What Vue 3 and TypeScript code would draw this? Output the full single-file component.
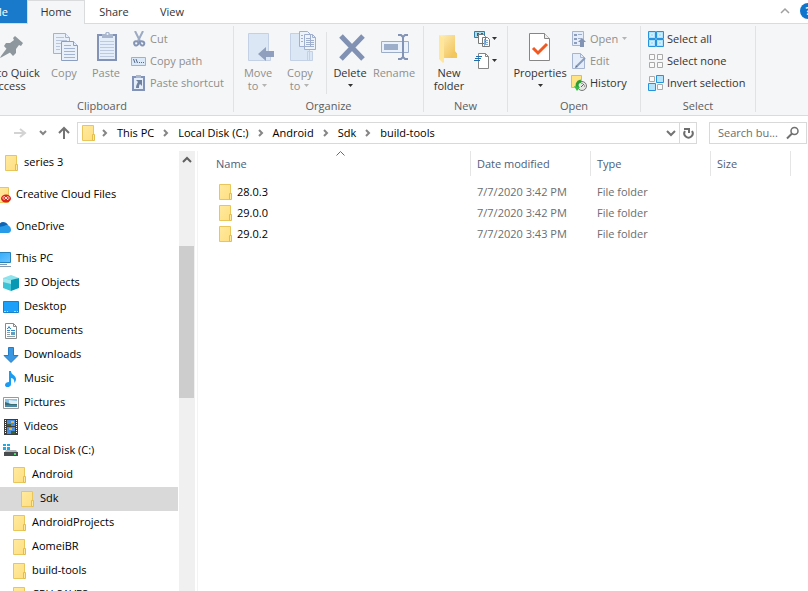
<script setup lang="ts">
import { ref } from 'vue'

interface TreeItem {
  label: string
  icon: string
  depth: number
  spaced?: boolean
}

interface Entry {
  name: string
  modified: string
  type: string
}

const tree: TreeItem[] = [
  { label: 'series 3', icon: 'folder', depth: 1 },
  { label: 'Creative Cloud Files', icon: 'creative', depth: 0, spaced: true },
  { label: 'OneDrive', icon: 'onedrive', depth: 0, spaced: true },
  { label: 'This PC', icon: 'pc', depth: 0, spaced: true },
  { label: '3D Objects', icon: 'cube', depth: 1 },
  { label: 'Desktop', icon: 'desktop', depth: 1 },
  { label: 'Documents', icon: 'documents', depth: 1 },
  { label: 'Downloads', icon: 'downloads', depth: 1 },
  { label: 'Music', icon: 'music', depth: 1 },
  { label: 'Pictures', icon: 'pictures', depth: 1 },
  { label: 'Videos', icon: 'videos', depth: 1 },
  { label: 'Local Disk (C:)', icon: 'disk', depth: 1 },
  { label: 'Android', icon: 'folder', depth: 2 },
  { label: 'Sdk', icon: 'folder', depth: 3 },
  { label: 'AndroidProjects', icon: 'folder', depth: 2 },
  { label: 'AomeiBR', icon: 'folder', depth: 2 },
  { label: 'build-tools', icon: 'folder', depth: 2 },
  { label: 'CPU SAVES', icon: 'folder', depth: 2 },
]

const crumbs = ['This PC', 'Local Disk (C:)', 'Android', 'Sdk', 'build-tools']

const entries: Entry[] = [
  { name: '28.0.3', modified: '7/7/2020 3:42 PM', type: 'File folder' },
  { name: '29.0.0', modified: '7/7/2020 3:42 PM', type: 'File folder' },
  { name: '29.0.2', modified: '7/7/2020 3:43 PM', type: 'File folder' },
]

const selected = ref('Sdk')
const query = ref('')
</script>

<template>
  <div class="explorer">
    <svg class="sprite" aria-hidden="true">
      <defs>
        <linearGradient id="gFolder" x1="0" y1="0" x2="1" y2="1">
          <stop offset="0" stop-color="#ffeaa0" /><stop offset="1" stop-color="#ffdf80" />
        </linearGradient>
        <linearGradient id="gBack" x1="0" y1="0" x2="1" y2="1">
          <stop offset="0" stop-color="#fff0b8" /><stop offset="1" stop-color="#f0bd4c" />
        </linearGradient>
        <linearGradient id="gScreen" x1="0" y1="0" x2="1" y2="1">
          <stop offset="0" stop-color="#29a9fb" /><stop offset="1" stop-color="#6cc5fb" />
        </linearGradient>
      </defs>
      <symbol id="pin" viewBox="0 0 32 32">
        <path fill="#8f979e" d="M22 5L30 12L28 15L26 14L23 18L23 22L20 25L11 15L13 12L17 12L21 9L20 7ZM14 17L18 21L9 26L7 27L8 25Z" />
      </symbol>
      <symbol id="copy" viewBox="0 0 32 32">
        <g fill="#e9f0fa" stroke="#a4b2cf">
          <path d="M5.500 2.500h12l4 4v16h-16z" /><path d="M17.500 2.500v4h4" />
          <path d="M8 6.500h8M8 9.500h11M8 12.500h5M8 15.500h4M8 18.500h4" stroke="#b9c5dc" />
          <path d="M13.500 10.500h12l4 4v15h-16z" stroke="#8c9fc2" /><path d="M25.500 10.500v4h4" stroke="#8c9fc2" />
          <path d="M16 14.500h7M16 17.500h11M16 20.500h11M16 23.500h11M16 26.500h11" stroke="#a3b3d2" />
        </g>
      </symbol>
      <symbol id="paste" viewBox="0 0 32 32">
        <path fill="#e4edfa" stroke="#8293b7" stroke-width="2" d="M8 4h18v25H8z" />
        <path stroke="#bdc9df" d="M10 10.500h14M10 13.500h14M10 16.500h14M10 19.500h14M10 22.500h14M10 25.500h14" />
        <path fill="#a7b5cd" d="M12 7V3h3l1-2h3l1 2h3v4z" /><circle cx="17.500" cy="3" r="1" fill="#f2f5fa" />
      </symbol>
      <symbol id="moveto" viewBox="0 0 32 32">
        <path fill="#dce7f6" stroke="#c3d0e5" d="M6.500 2.500h20v27h-20z" /><path fill="#dce7f6" stroke="#c3d0e5" d="M23.500 20.500h5v9h-5z" />
        <path fill="#8f9fbd" d="M16 23l8-7v4h8v6h-8v4z" />
      </symbol>
      <symbol id="copyto" viewBox="0 0 32 32">
        <path fill="#dce7f6" stroke="#c3d0e5" d="M6.500 2.500h19v27h-19zM23.500 20.500h5v9h-5z" />
        <path fill="#edf3fb" stroke="#a0afcd" d="M15.500.5h8l3 3v12h-11zM20.500 3.500h8l3 3v12h-11z" />
        <path fill="none" stroke="#a0afcd" d="M28.500 3.500v3h3M17 4.500h2M17 7.500h2M17 10.500h2M22 7.500h5M22 9.500h8M22 11.500h8M22 13.500h8M22 15.500h8" />
      </symbol>
      <symbol id="delete" viewBox="0 0 32 32">
        <path stroke="#8191b4" stroke-width="5" d="M7 5l22 23M29 5L7 28" />
      </symbol>
      <symbol id="rename" viewBox="0 0 32 32">
        <path fill="#eaf1fb" stroke="#9cadca" d="M3.500 10.500h27v11h-27z" /><path fill="#9caeca" d="M6 13h14v6H6z" />
        <path fill="none" stroke="#8293b5" stroke-width="2" d="M20 4h3l2 2 2-2h3M25 5v22M20 28h3l2-2 2 2h3" />
      </symbol>
      <symbol id="newfolder" viewBox="0 0 32 32">
        <path fill="url(#gBack)" d="M6 4h16v16l2 3v4H11z" /><path fill="#f4c75b" d="M20 21l4 1v5h-4z" />
        <path fill="#ffe69a" d="M6 4l5 4v23l-1 1-4-4z" />
      </symbol>
      <symbol id="properties" viewBox="0 0 32 32">
        <path fill="#fff" stroke="#868686" d="M5.500 2.500h15l5 5v22h-20z" /><path fill="#eee" stroke="#868686" d="M20.500 2.500v5h5" />
        <path fill="none" stroke="#f05a22" stroke-width="3" d="M9 17l5 5 9-9" />
      </symbol>
      <symbol id="cut" viewBox="0 0 16 16">
        <path fill="none" stroke="#9daac3" stroke-width="2" d="M4 0l5 10M12 0L7 10" /><path fill="none" stroke="#8494b5" stroke-width="2" d="M6.500 10.500c-3-1-4 1-3 3s4 1 4-2zM9 10.500c3-1 5 1 4 3s-4 1-4-2z" />
      </symbol>
      <symbol id="copypath" viewBox="0 0 16 16">
        <path fill="#dce9f9" stroke="#9eafd0" d="M.5 4.500h14v8H.5z" /><path fill="none" stroke="#556887" d="M2.500 6l1.500 4M5 6l1.500 4M8 9.500h1M10 9.500h1M12 9.500h1" />
      </symbol>
      <symbol id="shortcut" viewBox="0 0 16 16">
        <path fill="#e4edfa" stroke="#8293b7" stroke-width="2" d="M2 2h11v13H2z" /><path fill="#a8b6ce" d="M5 0h5v3H5z" />
        <path fill="#71829f" d="M5 5h6v6L9 9c-1 1-1 2-1 4H5c0-3 1-4 2-6z" />
      </symbol>
      <symbol id="newitem" viewBox="0 0 16 16">
        <path fill="#a5ddec" stroke="#347ca1" d="M.5.5h10v6H.5z" /><path fill="#236796" d="M3 2h2v3H3zM7 2h2v2H7z" />
        <path fill="#fff" stroke="#777" d="M4.500 3.500h5l2 2v7h-7zM8.500 6.500h5l2 2v7h-7z" /><path stroke="#e58d87" d="M10.500 8v7" /><path stroke="#81aad4" d="M10 9.500h4M10 11.500h4M10 13.500h4" />
      </symbol>
      <symbol id="easy" viewBox="0 0 16 16">
        <path fill="#fff" stroke="#858585" d="M4.500.5h7l3 3v12h-10z" /><path fill="none" stroke="#858585" d="M11.500.5v3h3" /><path stroke="#236da9" stroke-width="1" d="M2 3.500h6M1 5.500h6M0 7.500h6" />
      </symbol>
      <symbol id="open" viewBox="0 0 16 16">
        <path fill="#e4edf9" stroke="#a6b4d0" d="M1.500.5h11v14h-11z" /><path fill="#8c9dbe" d="M3 3h3v2H3zM3 7h3v2H3zM3 11h3v2H3z" /><path stroke="#a0afc9" d="M7 3.500h4M7 7.500h4" /><path fill="#8293b4" d="M11 7l4 4h-2v5h-4v-5H7z" />
      </symbol>
      <symbol id="edit" viewBox="0 0 16 16">
        <path fill="#e4edf9" stroke="#a6b4d0" d="M1.500.5h8l4 4v11h-12z" /><path fill="none" stroke="#a6b4d0" d="M9.500.5v4h4" /><path stroke="#8b9cbb" stroke-width="2" d="M14 5l-8 8" /><path fill="#60718f" d="M4 15l1-3 2 2z" />
      </symbol>
      <symbol id="history" viewBox="0 0 16 16">
        <path fill="#ffe384" stroke="#e4bb4e" d="M.5.5h10v12H.5z" /><circle cx="11" cy="11" r="4.500" fill="#e5e7e5" stroke="#777" /><path fill="none" stroke="#626262" d="M10 12l3-3M11 8v1M13 11h1" /><path fill="none" stroke="#2a9e36" stroke-width="3" d="M10 6c-4 1-5 4-3 7" /><path fill="#35bc43" d="M3 11l6 1-3 4z" />
      </symbol>
      <symbol id="selall" viewBox="0 0 16 16">
        <path fill="#afe0fc" stroke="#2693df" stroke-width="1" d="M.5.5h7v7h-7zM8.500.5h7v7h-7zM.5 8.500h7v7h-7zM8.500 8.500h7v7h-7z" /><path fill="none" stroke="#d4effe" d="M2.500 2.500h3v3h-3zM10.500 2.500h3v3h-3zM2.500 10.500h3v3h-3zM10.500 10.500h3v3h-3z" />
      </symbol>
      <symbol id="selnone" viewBox="0 0 16 16">
        <path fill="#fafafa" stroke="#a9a9a9" d="M1.500 1.500h5v5h-5zM9.500 1.500h5v5h-5zM1.500 9.500h5v5h-5zM9.500 9.500h5v5h-5z" />
      </symbol>
      <symbol id="invert" viewBox="0 0 16 16">
        <path fill="#fafafa" stroke="#a9a9a9" d="M1.500 1.500h5v5h-5zM9.500 9.500h5v5h-5z" /><path fill="#b8e3fc" stroke="#2693df" d="M8.500.5h7v7h-7zM.5 8.500h7v7h-7z" />
      </symbol>
      <symbol id="folder" viewBox="0 0 16 16">
        <path fill="url(#gFolder)" stroke="#e9c65c" d="M2.500.5h11v15h-11z" /><path fill="#ffe99d" stroke="#e5bd4a" d="M12.500 9.500h2v6h-2z" />
      </symbol>
      <symbol id="creative" viewBox="0 0 16 16">
        <path fill="url(#gFolder)" stroke="#e9c65c" d="M2.500.5h11v15h-11z" /><ellipse cx="11" cy="11.500" rx="5" ry="4" fill="#dc2418" /><path fill="none" stroke="#ffe4dc" d="M13 13l-3-3c-1-1-2 0-2 1s1 2 2 1l2-2c1-1 2 0 2 1s-1 2-2 1" />
      </symbol>
      <symbol id="onedrive" viewBox="0 0 16 16">
        <path fill="#0f64b4" d="M1 9c0-2 2-3 3-3 1-4 7-4 9 0l-4 5H2z" /><path fill="#279be8" d="M2 13c-2-2-1-5 2-5l5-1 2-1c3 0 5 2 5 5 0 1-1 3-3 3H4z" />
      </symbol>
      <symbol id="pc" viewBox="0 0 16 16">
        <path fill="url(#gScreen)" stroke="#2781ba" d="M.5 1.500h15v10H.5z" /><path stroke="#829bb0" d="M5 13.500h7M4 15.500h12" />
      </symbol>
      <symbol id="cube" viewBox="0 0 16 16">
        <path fill="#8fe3ec" d="M0 3l8-3 8 3-8 3z" /><path fill="#3cc4d6" d="M0 3l8 2v11l-8-3z" /><path fill="#0798b4" d="M8 5l8-2v10l-8 3z" /><path fill="#a3e9f0" d="M0 3l8 2v4L0 7z" />
      </symbol>
      <symbol id="desktop" viewBox="0 0 16 16">
        <path fill="#1ca0fa" stroke="#1681c9" d="M.5 2.500h15v11H.5z" /><path stroke="#a9ddff" stroke-dasharray="2 1" d="M1 12.500h4M11 12.500h4" />
      </symbol>
      <symbol id="documents" viewBox="0 0 16 16">
        <path fill="#fff" stroke="#8a8a8a" d="M2.500.5h8l3 3v12h-11z" /><path fill="none" stroke="#8a8a8a" d="M10.500.5v3h3" /><path fill="none" stroke="#288bd2" d="M4 5.500h1l1-2 1 2h1M4 7.500h3M8 7.500h4" /><path fill="#609fc0" d="M8 9h4v3H8z" /><path stroke="#90a0aa" d="M4 9.500h3M4 11.500h3M4 13.500h8" />
      </symbol>
      <symbol id="downloads" viewBox="0 0 16 16"><path fill="#3b97e1" stroke="#257dc3" d="M5.500.5h5v8h4.500L8 15.500 1 8.500h4.500z" /></symbol>
      <symbol id="music" viewBox="0 0 16 16"><path fill="#1b9cf3" d="M6 0h2c0 4 5 4 5 8 0 2-1 3-2 4 1-3-1-5-3-5v6c0 4-6 4-6 1 0-2 2-3 4-3z" /></symbol>
      <symbol id="pictures" viewBox="0 0 16 16"><path fill="#fff" stroke="#999" d="M.5 2.500h15v11H.5z" /><path fill="#8cc4ea" d="M2 4h12v5H2z" /><path fill="#e2eef4" d="M6 5l8 1v3H6z" /><path fill="#386f76" d="M2 7l6 2h6v1H2z" /><path fill="#4a87ac" d="M2 10h12v2H2z" /></symbol>
      <symbol id="videos" viewBox="0 0 16 16"><path fill="#3d3d3d" d="M1 0h14v16H1z" /><path stroke="#fff" stroke-dasharray="1 1" d="M2.500 1v14M13.500 1v14" /><path fill="#4b8edd" d="M4 1h8v6H4zM4 8h8v7H4z" /><path fill="#e2b63c" d="M8 2h3v2H8zM6 9h3v2H6z" /><path fill="#3a6134" d="M4 5h4v2H4zM8 12h4v3H8z" /></symbol>
      <symbol id="disk" viewBox="0 0 16 16"><path fill="#18afe9" d="M0 1h3v2H0zM4 1h3v2H4zM0 4h3v3H0zM4 4h3v3H4z" /><path fill="#b5b8bb" d="M3 7h10l2 3H1z" /><path fill="#4a4d50" d="M1 9h14v4H1z" /><path fill="#47e46a" d="M11 10h2v2h-2z" /></symbol>
      <symbol id="arrowRight" viewBox="0 0 16 16"><path fill="none" stroke="#d3d3d3" stroke-width="2" d="M2 8h11M8 4l5 4-5 4" /></symbol>
      <symbol id="arrowUp" viewBox="0 0 16 16"><path fill="none" stroke="#737373" stroke-width="2" d="M8 14V3M3 8l5-5 5 5" /></symbol>
      <symbol id="chevDown" viewBox="0 0 16 16"><path fill="none" stroke="#737373" stroke-width="2" d="M4 6l4 4 4-4" /></symbol>
      <symbol id="chevSmall" viewBox="0 0 16 16"><path fill="none" stroke="#858585" stroke-width="2" d="M6 6l3 3 3-3" /></symbol>
      <symbol id="chevUp" viewBox="0 0 16 16"><path fill="none" stroke="#606060" stroke-width="2" d="M4 10l4-4 4 4" /></symbol>
      <symbol id="chevRight" viewBox="0 0 8 16"><path fill="none" stroke="#858585" stroke-width="2" d="M2 5l3 3-3 3" /></symbol>
      <symbol id="refresh" viewBox="0 0 16 16"><path fill="none" stroke="#6d6d6d" stroke-width="2" d="M12 6A4.200 4.200 0 1 1 5 6" /><path fill="none" stroke="#6d6d6d" stroke-width="2" d="M4 4h5v4" /></symbol>
      <symbol id="search" viewBox="0 0 16 16"><circle cx="10.500" cy="6" r="3.500" fill="none" stroke="#707070" stroke-width="1.500" /><path stroke="#707070" stroke-width="2" d="M8 8.500l-5 5" /></symbol>
      <symbol id="down" viewBox="0 0 7 4"><path fill="currentColor" d="M1 0h5L3.500 3z" /></symbol>
    </svg>

    <nav class="tabs" aria-label="Ribbon tabs">
      <button class="tab file">File</button>
      <button class="tab active">Home</button>
      <button class="tab">Share</button>
      <button class="tab">View</button>
      <span class="grow"></span>
      <button class="collapse" aria-label="Collapse ribbon">
        <svg width="16" height="16" viewBox="0 0 16 16"><path fill="none" stroke="#a0a0a0" stroke-width="1.500" d="M4 10l4-4 4 4" /></svg>
      </button>
      <button class="help" aria-label="Help">?</button>
    </nav>

    <div class="ribbon">
      <section class="group clipboard">
        <div class="tools">
          <button class="big pin"><svg><use href="#pin" /></svg><span>Pin to Quick<br />access</span></button>
          <button class="big off"><svg><use href="#copy" /></svg><span>Copy</span></button>
          <button class="big off"><svg><use href="#paste" /></svg><span>Paste</span></button>
          <div class="stack">
            <button class="small off"><svg><use href="#cut" /></svg>Cut</button>
            <button class="small off"><svg><use href="#copypath" /></svg>Copy path</button>
            <button class="small off"><svg><use href="#shortcut" /></svg>Paste shortcut</button>
          </div>
        </div>
        <h2>Clipboard</h2>
      </section>
      <section class="group organize">
        <div class="tools">
          <button class="big off"><svg><use href="#moveto" /></svg><span>Move<br />to <svg class="caret"><use href="#down" /></svg></span></button>
          <button class="big off"><svg><use href="#copyto" /></svg><span>Copy<br />to <svg class="caret"><use href="#down" /></svg></span></button>
          <i class="rule"></i>
          <button class="big"><svg><use href="#delete" /></svg><span>Delete<br /><svg class="caret"><use href="#down" /></svg></span></button>
          <button class="big wide off"><svg><use href="#rename" /></svg><span>Rename</span></button>
        </div>
        <h2>Organize</h2>
      </section>
      <section class="group new">
        <div class="tools">
          <button class="big"><svg><use href="#newfolder" /></svg><span>New<br />folder</span></button>
          <div class="stack">
            <button class="small" aria-label="New item"><svg><use href="#newitem" /></svg><svg class="caret"><use href="#down" /></svg></button>
            <button class="small" aria-label="Easy access"><svg><use href="#easy" /></svg><svg class="caret"><use href="#down" /></svg></button>
          </div>
        </div>
        <h2>New</h2>
      </section>
      <section class="group opening">
        <div class="tools">
          <button class="big props"><svg><use href="#properties" /></svg><span>Properties<br /><svg class="caret"><use href="#down" /></svg></span></button>
          <div class="stack">
            <button class="small off"><svg><use href="#open" /></svg>Open <svg class="caret"><use href="#down" /></svg></button>
            <button class="small off"><svg><use href="#edit" /></svg>Edit</button>
            <button class="small"><svg><use href="#history" /></svg>History</button>
          </div>
        </div>
        <h2>Open</h2>
      </section>
      <section class="group select">
        <div class="tools">
          <div class="stack">
            <button class="small"><svg><use href="#selall" /></svg>Select all</button>
            <button class="small"><svg><use href="#selnone" /></svg>Select none</button>
            <button class="small"><svg><use href="#invert" /></svg>Invert selection</button>
          </div>
        </div>
        <h2>Select</h2>
      </section>
    </div>

    <div class="navbar">
      <div class="history">
        <button aria-label="Forward"><svg><use href="#arrowRight" /></svg></button>
        <button aria-label="Recent locations"><svg><use href="#chevSmall" /></svg></button>
        <button aria-label="Up"><svg><use href="#arrowUp" /></svg></button>
      </div>
      <div class="address">
        <svg class="here"><use href="#folder" /></svg>
        <nav class="crumbs" aria-label="Path">
          <template v-for="crumb in crumbs" :key="crumb">
            <svg class="sep"><use href="#chevRight" /></svg>
            <a href="#">{{ crumb }}</a>
          </template>
        </nav>
        <button class="drop" aria-label="Previous locations"><svg><use href="#chevDown" /></svg></button>
        <button class="reload" aria-label="Refresh"><svg><use href="#refresh" /></svg></button>
      </div>
      <label class="search">
        <input v-model="query" type="text" placeholder="Search bu..." aria-label="Search build-tools" />
        <svg><use href="#search" /></svg>
      </label>
    </div>

    <div class="main">
      <aside class="side">
        <ul class="tree">
          <li v-for="item in tree" :key="item.label" :class="['depth' + item.depth, { spaced: item.spaced, current: item.label === selected }]">
            <button @click="selected = item.label"><svg><use :href="'#' + item.icon" /></svg><span>{{ item.label }}</span></button>
          </li>
        </ul>
        <div class="scroll">
          <button aria-label="Scroll up"><svg><use href="#chevUp" /></svg></button>
          <div class="thumb"></div>
        </div>
      </aside>
      <main class="files">
        <table>
          <colgroup><col class="c-name" /><col class="c-mid" /><col class="c-mid" /><col class="c-size" /><col /></colgroup>
          <thead>
            <tr>
              <th class="name">Name<svg class="sort" viewBox="0 0 9 5"><path fill="none" stroke="#6a6a6a" d="M.5 4.500l4-4 4 4" /></svg></th>
              <th>Date modified</th>
              <th>Type</th>
              <th>Size</th>
              <td></td>
            </tr>
          </thead>
          <tbody>
            <tr v-for="entry in entries" :key="entry.name">
              <td class="name"><span><svg><use href="#folder" /></svg>{{ entry.name }}</span></td>
              <td>{{ entry.modified }}</td>
              <td>{{ entry.type }}</td>
              <td></td>
              <td></td>
            </tr>
          </tbody>
        </table>
      </main>
    </div>
  </div>
</template>

<style>
body {
  background: #fff;
  overflow: hidden;
}
</style>

<style scoped>
.explorer {
  display: flex;
  flex-direction: column;
  height: 100vh;
  overflow: hidden;
  font: 11px/16px 'Open Sans', 'Noto Sans', sans-serif;
  color: #000;
  background: #fff;
}
.sprite {
  position: absolute;
  width: 0;
  height: 0;
}
button {
  padding: 0;
  border: 0;
  background: none;
  font: inherit;
  color: inherit;
}
svg {
  display: block;
  flex: none;
  width: 16px;
  height: 16px;
}
.grow {
  flex: 1;
}

/* Ribbon tabs */
.tabs {
  display: flex;
  align-items: stretch;
  height: 24px;
  box-sizing: border-box;
  margin-right: -8px;
  box-shadow: inset 0 -1px #dadbdc;
  color: #333;
}
.tab {
  width: 58px;
  padding-bottom: 1px;
}
.tab.active {
  box-sizing: border-box;
  border: 1px solid #dadbdc;
  border-bottom: 0;
  background: #f5f6f7;
}
.tab.file {
  display: flex;
  justify-content: flex-end;
  align-items: center;
  width: 27px;
  height: 23px;
  padding: 0 19px 0 0;
  box-sizing: border-box;
  background: #1979ca;
  color: #fff;
}
.collapse {
  padding: 0 7px 2px 0;
}
.help {
  width: 16px;
  height: 16px;
  margin-top: 3px;
  border-radius: 8px;
  background: #0f74cc;
  color: #fff;
  font-weight: 700;
}

/* Ribbon groups */
.ribbon {
  display: flex;
  flex: none;
  height: 91px;
  padding-top: 2px;
  box-sizing: border-box;
  background: #f5f6f7;
  color: #333;
}
.group {
  display: flex;
  flex-direction: column;
  flex: none;
  height: 86px;
  box-sizing: border-box;
  border-right: 1px solid #e1e2e3;
}
.group h2 {
  margin: 0;
  text-align: center;
  font: inherit;
  color: #5c5c5c;
}
.tools {
  display: flex;
  flex: none;
  height: 72px;
}
.clipboard {
  width: 263px;
  margin-left: -29px;
}
.organize {
  width: 190px;
}
.organize .tools {
  padding-left: 3px;
}
.new {
  width: 84px;
}
.new .tools {
  padding-left: 4px;
}
.opening {
  width: 133px;
}
.opening .tools {
  padding-left: 5px;
}
.select {
  width: 115px;
}
.select .tools {
  padding-left: 3px;
}
.big {
  display: flex;
  flex-direction: column;
  align-items: center;
  width: 42px;
  padding-top: 5px;
  line-height: 13px;
  white-space: nowrap;
}
.big > svg {
  width: 32px;
  height: 32px;
  margin-bottom: 3px;
}
.pin {
  width: 72px;
  padding-left: 4px;
}
.wide {
  width: 46px;
}
.props {
  width: 54px;
}
.off {
  color: #8e8e8e;
}
.caret {
  display: inline-block;
  width: 7px;
  height: 4px;
  vertical-align: 2px;
}
.off .caret {
  color: #b4b4b4;
}
.rule {
  width: 1px;
  height: 62px;
  margin: 6px 2px 0 5px;
  background: #e1e2e3;
}
.stack {
  display: flex;
  flex-direction: column;
  padding: 2px 0 0 4px;
}
.small {
  display: flex;
  align-items: center;
  gap: 3px;
  height: 22px;
  white-space: nowrap;
}
.new .small {
  gap: 1px;
}

/* Address bar */
.navbar {
  display: flex;
  flex: none;
  align-items: flex-start;
  height: 36px;
  padding: 6px 1px 0 12px;
  box-sizing: border-box;
  border-top: 1px solid #dadbdc;
}
.history {
  display: flex;
  align-items: center;
  gap: 6px;
  width: 65px;
  height: 22px;
}
.address,
.search {
  display: flex;
  align-items: center;
  height: 22px;
  box-sizing: border-box;
  border: 1px solid #d9d9d9;
}
.address {
  flex: 1;
}
.here {
  margin: 0 5px 0 2px;
}
.crumbs {
  display: flex;
  flex: 1;
  align-items: center;
  white-space: nowrap;
}
.crumbs a {
  padding: 0 8px;
  color: #000;
  text-decoration: none;
}
.sep {
  width: 8px;
}
.reload {
  display: flex;
  align-items: center;
  justify-content: center;
  width: 17px;
  height: 20px;
  border-left: 1px solid #d9d9d9;
}
.search {
  width: 98px;
  margin-left: 12px;
  padding: 0 6px 0 8px;
}
.search input {
  flex: 1;
  min-width: 0;
  padding: 0;
  border: 0;
  outline: 0;
  background: none;
  font: inherit;
}
.search input::placeholder {
  color: #6d6d6d;
}

/* Navigation tree */
.main {
  display: flex;
  flex: 1;
  min-height: 0;
}
.side {
  display: flex;
  width: 198px;
  flex: none;
  overflow: hidden;
}
.tree {
  flex: 1;
  margin: 0;
  padding: 0;
  list-style: none;
}
.tree button {
  display: flex;
  align-items: center;
  gap: 5px;
  width: 100%;
  height: 24px;
  white-space: nowrap;
}
.tree span {
  padding-bottom: 2px;
}
.spaced {
  margin-top: 8px;
}
.depth0 button {
  margin-left: -5px;
}
.depth1 {
  padding-left: 3px;
}
.depth2 {
  padding-left: 11px;
}
.depth3 {
  padding-left: 19px;
}
.current {
  background: #d9d9d9;
}
.scroll {
  width: 16px;
  margin: 0 2px 0 1px;
  background: #f0f0f0;
}
.side::after {
  content: '';
  width: 1px;
  background: #f3f3f3;
}
.scroll button {
  display: block;
  height: 17px;
}
.thumb {
  width: 15px;
  height: 152px;
  margin-top: 78px;
  background: #cdcdcd;
}

/* File list */
.files {
  flex: 1;
  min-width: 0;
}
table {
  width: 100%;
  table-layout: fixed;
  border-collapse: separate;
  border-spacing: 0;
}
.c-name {
  width: 273px;
}
.c-mid {
  width: 120px;
}
.c-size {
  width: 80px;
}
th {
  position: relative;
  height: 25px;
  padding: 0 0 0 6px;
  box-sizing: border-box;
  border-right: 1px solid #e5e5e5;
  text-align: left;
  font-weight: 400;
  color: #4c607a;
}
th.name {
  padding-left: 18px;
}
.sort {
  position: absolute;
  top: 0;
  left: 138px;
  width: 9px;
  height: 5px;
}
tbody::before {
  content: '';
  display: block;
  height: 5px;
}
tbody td {
  height: 21px;
  padding: 0 0 0 6px;
  color: #6d6d6d;
}
tbody .name {
  padding-left: 19px;
  color: #000;
}
.name span {
  display: flex;
  align-items: center;
  gap: 4px;
}
</style>
